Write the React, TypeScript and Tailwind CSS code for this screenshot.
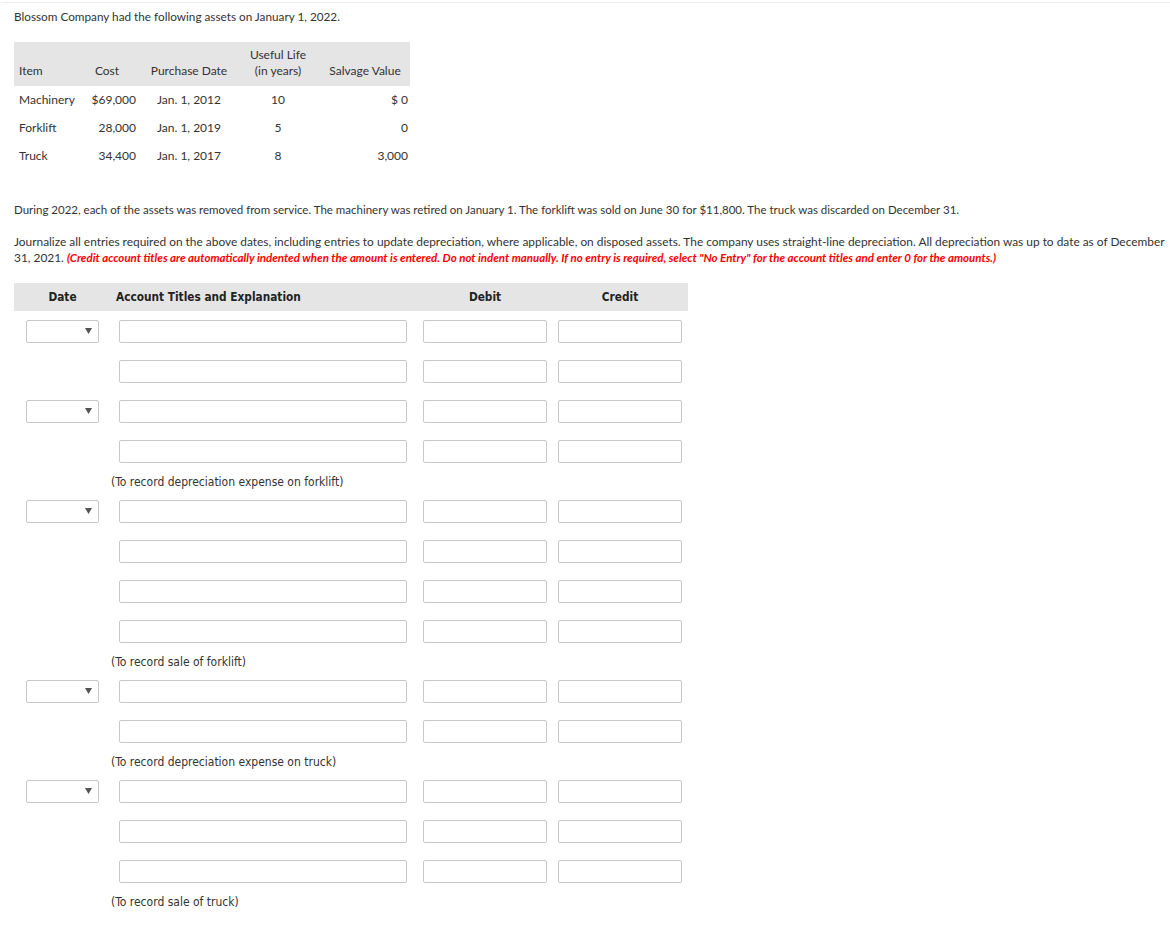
const assets = [
  { item: 'Machinery', cost: '$69,000', date: 'Jan. 1, 2012', life: '10', salvage: '$ 0' },
  { item: 'Forklift', cost: '28,000', date: 'Jan. 1, 2019', life: '5', salvage: '0' },
  { item: 'Truck', cost: '34,400', date: 'Jan. 1, 2017', life: '8', salvage: '3,000' },
];

type Line = { select?: boolean } | { note: string };

const journal: Line[] = [
  { select: true },
  {},
  { select: true },
  {},
  { note: '(To record depreciation expense on forklift)' },
  { select: true },
  {},
  {},
  {},
  { note: '(To record sale of forklift)' },
  { select: true },
  {},
  { note: '(To record depreciation expense on truck)' },
  { select: true },
  {},
  {},
  { note: '(To record sale of truck)' },
];

const condensed = "font-['DejaVu_Sans_Condensed','DejaVu_Sans',sans-serif]";

function DateSelect() {
  return (
    <div className="w-[73px] h-[23px] border border-[#c8c8c8] rounded-[2px] bg-white flex items-center justify-end pr-[6px]">
      <svg width="7" height="6" viewBox="0 0 7 6">
        <path d="M0 0 L7 0 L3.5 6 Z" fill="#555" />
      </svg>
    </div>
  );
}

function Field({ w }: { w: string }) {
  return <div className={`${w} h-[23px] border border-[#c8c8c8] rounded-[2px] bg-white`} />;
}

export default function App() {
  return (
    <div className="w-[1170px] min-h-[930px] bg-white text-[#333] font-['Lato','Noto_Sans',sans-serif] text-[12px] leading-[16px]">
      <div className="pt-[2px] pl-[1px]">
        <div className="h-px bg-[#ececec]" />
      </div>

      <div className="px-[14px]">
        <p className="mt-[6px] text-[11.75px]">Blossom Company had the following assets on January 1, 2022.</p>

        {/* Assets table */}
        <div className="mt-[17px] w-[396px]">
          <div className="flex items-end h-[44px] bg-[#e5e5e5] pb-[7px]">
            <div className="w-[66px] pl-[5px]">Item</div>
            <div className="w-[60px] text-center pr-[6px]">Cost</div>
            <div className="w-[96px] text-center pl-[2px]">Purchase Date</div>
            <div className="w-[84px] text-center">
              Useful Life
              <br />
              (in years)
            </div>
            <div className="w-[90px] text-center">Salvage Value</div>
          </div>
          {assets.map((a) => (
            <div key={a.item} className="flex items-center h-[28px]">
              <div className="w-[66px] pl-[5px]">{a.item}</div>
              <div className="w-[60px] text-right pr-[4px]">{a.cost}</div>
              <div className="w-[96px] text-center pl-[2px]">{a.date}</div>
              <div className="w-[84px] text-center">{a.life}</div>
              <div className="w-[90px] text-right pr-[2px]">{a.salvage}</div>
            </div>
          ))}
        </div>

        <p className="mt-[32px] text-[11.5px]">
          During 2022, each of the assets was removed from service. The machinery was retired on January 1. The forklift was sold on June 30 for $11,800. The truck was discarded on December 31.
        </p>

        <p className="mt-[16px] w-[1156px] text-[11.9px]">
          <span className="whitespace-nowrap">
            Journalize all entries required on the above dates, including entries to update depreciation, where applicable, on disposed assets. The company uses straight-line depreciation. All depreciation was up to date as of December
          </span>
          <br />
          31, 2021.{' '}
          <span className="text-[#ff0000] italic font-bold text-[11.5px]">
            (Credit account titles are automatically indented when the amount is entered. Do not indent manually. If no entry is required, select "No Entry" for the account titles and enter 0 for the amounts.)
          </span>
        </p>

        {/* Journal */}
        <div className="mt-[17px] w-[674px]">
          <div className={`flex items-center h-[28px] bg-[#e5e5e5] font-bold text-[11.75px] text-[#222] ${condensed}`}>
            <div className="w-[97px] text-center">Date</div>
            <div className="w-[304px] pl-[5px]">Account Titles and Explanation</div>
            <div className="ml-[8px] w-[124px] text-center">Debit</div>
            <div className="ml-[11px] w-[124px] text-center">Credit</div>
          </div>

          {journal.map((line, i) =>
            'note' in line ? (
              <div key={i} className={`h-[20px] flex items-center pl-[97px] pt-[1px] text-[12px] text-[#333] ${condensed}`}>
                {line.note}
              </div>
            ) : (
              <div key={i} className="h-[40px] flex items-center">
                <div className="w-[97px] flex justify-center">{line.select && <DateSelect />}</div>
                <div className="w-[304px] pl-[8px]">
                  <Field w="w-[288px]" />
                </div>
                <div className="ml-[8px]">
                  <Field w="w-[124px]" />
                </div>
                <div className="ml-[11px]">
                  <Field w="w-[124px]" />
                </div>
              </div>
            )
          )}
        </div>
      </div>
    </div>
  );
}
